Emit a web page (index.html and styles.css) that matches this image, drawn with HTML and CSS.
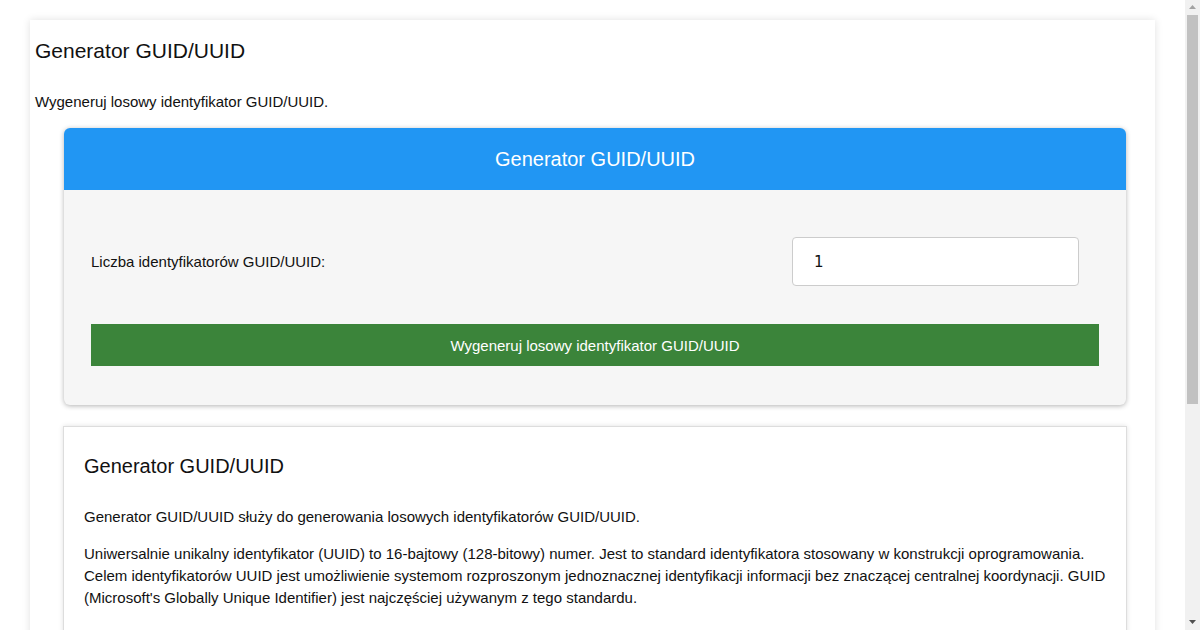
FILE: index.html
```html
<!DOCTYPE html>
<html lang="pl">
<head>
<meta charset="utf-8">
<title>Generator GUID/UUID</title>
<link rel="stylesheet" href="styles.css">
</head>
<body>
<div class="page">
  <h1 class="page-title">Generator GUID/UUID</h1>
  <p class="page-lead">Wygeneruj losowy identyfikator GUID/UUID.</p>

  <div class="card">
    <div class="card-header">Generator GUID/UUID</div>
    <div class="card-body">
      <div class="form-row">
        <label class="form-label" for="count">Liczba identyfikatorów GUID/UUID:</label>
        <input class="form-input" id="count" type="text" value="1">
      </div>
      <button class="btn-generate" type="button">Wygeneruj losowy identyfikator GUID/UUID</button>
    </div>
  </div>

  <div class="info">
    <h2 class="info-title">Generator GUID/UUID</h2>
    <p>Generator GUID/UUID służy do generowania losowych identyfikatorów GUID/UUID.</p>
    <p>Uniwersalnie unikalny identyfikator (UUID) to 16-bajtowy (128-bitowy) numer. Jest to standard identyfikatora stosowany w konstrukcji oprogramowania. Celem identyfikatorów UUID jest umożliwienie systemom rozproszonym jednoznacznej identyfikacji informacji bez znaczącej centralnej koordynacji. GUID (Microsoft's Globally Unique Identifier) jest najczęściej używanym z tego standardu.</p>
    <h3 class="info-subtitle">Format UUID</h3>
    <p>Identyfikator UUID jest reprezentowany przez 32 cyfry szesnastkowe, wyświetlane w pięciu grupach oddzielonych łącznikami, w formie 8-4-4-4-12, co daje łącznie 36 znaków.</p>
    <p>Przykład: 123e4567-e89b-12d3-a456-426655440000</p>
    <p>Generator wykorzystuje wersję 4 identyfikatora UUID, która opiera się na liczbach losowych.</p>
  </div>
</div>

<div class="scrollbar" aria-hidden="true">
  <svg class="sb-arrow sb-up" width="15" height="15" viewBox="0 0 15 15"><polygon points="4,9 11,9 7.5,5" fill="#a3a3a3"/></svg>
  <div class="sb-track"><div class="sb-thumb"></div></div>
  <svg class="sb-arrow sb-down" width="15" height="15" viewBox="0 0 15 15"><polygon points="4,5 11,5 7.5,9" fill="#505050"/></svg>
</div>
</body>
</html>
```

FILE: styles.css
```css
html, body {
  margin: 0;
  padding: 0;
  background: #ffffff;
}

body {
  font-family: "Liberation Sans", Arial, sans-serif;
  color: #111;
  font-size: 15px;
}

.page {
  margin: 20px 45px 20px 30px;
  padding: 19px 5px 30px 5px;
  background: #fff;
  box-shadow: 0 0 8px rgba(0, 0, 0, 0.12);
}

.page-title {
  font-size: 21px;
  font-weight: normal;
  line-height: 24px;
  margin: 0 0 30px 0;
}

.page-lead {
  margin: 0 0 18px 0;
  line-height: 17px;
}

.card {
  margin: 0 24px 0 29px;
  border-radius: 6px;
  background: #f6f6f6;
  box-shadow: 0 1px 5px rgba(0, 0, 0, 0.3);
}

.card-header {
  background: #2196f3;
  color: #fff;
  font-size: 20px;
  text-align: center;
  height: 62px;
  line-height: 62px;
  border-radius: 6px 6px 0 0;
}

.card-body {
  padding: 47px 27px 39px 27px;
}

.form-row {
  display: flex;
  align-items: center;
  justify-content: space-between;
  padding-right: 20px;
}

.form-label {
  font-size: 15px;
}

.form-input {
  box-sizing: border-box;
  width: 287px;
  height: 49px;
  border: 1px solid #ccc;
  border-radius: 4px;
  background: #fff;
  padding: 0 21px;
  font-family: "DejaVu Sans", sans-serif;
  font-size: 15px;
  color: #111;
}

.btn-generate {
  display: block;
  width: 100%;
  margin-top: 38px;
  height: 42px;
  border: none;
  background: #3b843a;
  color: #fff;
  font-family: "Liberation Sans", Arial, sans-serif;
  font-size: 15px;
}

.info {
  margin: 21px 23px 0 28px;
  border: 1px solid #ddd;
  background: #fff;
  box-shadow: 0 0 5px rgba(0, 0, 0, 0.12);
  padding: 28px 20px 20px 20px;
}

.info-title {
  font-size: 20px;
  font-weight: normal;
  line-height: 23px;
  margin: 0 0 28px 0;
}

.info-subtitle {
  font-size: 18px;
  font-weight: normal;
  line-height: 22px;
  margin: 34px 0 16px 0;
}

.info p {
  line-height: 22px;
  margin: 0 0 15px 0;
}

/* Classic browser scrollbar, drawn over the right edge of the viewport */
.scrollbar {
  position: fixed;
  top: 0;
  right: 0;
  width: 15px;
  height: 100vh;
  background: #f1f1f1;
  display: flex;
  flex-direction: column;
}

.sb-arrow {
  display: block;
  flex: none;
}

.sb-track {
  flex: 1;
  padding: 0 2px;
}

.sb-thumb {
  height: 389px;
  background: #c1c1c1;
}
```
